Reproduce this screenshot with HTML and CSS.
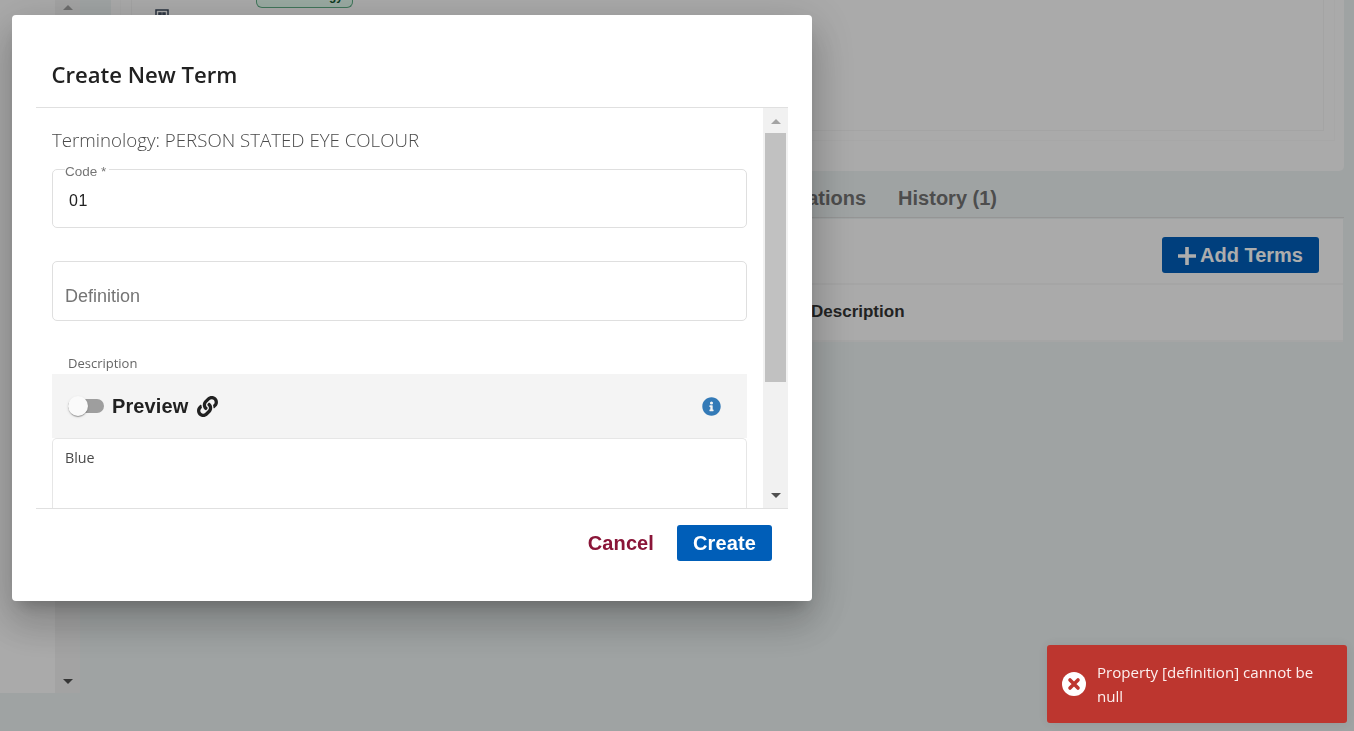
FILE: index.html
```html
<!DOCTYPE html>
<html lang="en">
<head>
<meta charset="utf-8">
<title>Create New Term</title>
<link rel="stylesheet" href="styles.css">
</head>
<body>
<div class="app">
  <aside class="sidebar"></aside>
  <div class="side-scroll">
    <svg class="arrow" viewBox="0 0 10 5" width="10" height="5"><path d="M5 0l5 5H0z" fill="#a3a3a3"/></svg>
    <svg class="arrow" viewBox="0 0 10 5" width="10" height="5"><path d="M0 0h10L5 5z" fill="#505050"/></svg>
  </div>
  <main class="main">
    <section class="card">
      <div class="card-mid">
        <div class="inner-box">
          <div class="card-head">
            <svg class="doc-icon" viewBox="0 0 14 16" width="14" height="16"><path d="M1 1h12v14H1zM4 4h2v2H4zM8 4h2v2H8z" fill="none" stroke="#3d4a5c" stroke-width="1.5"/></svg>
            <span class="badge"><span class="badge-text">Terminology</span></span>
          </div>
        </div>
      </div>
    </section>
    <nav class="tabs">
      <span class="tab">Annotations</span>
      <span class="tab">History (1)</span>
    </nav>
    <section class="panel">
      <div class="panel-bar">
        <button class="add-btn"><svg viewBox="0 0 18 18" width="18" height="18"><path d="M7.200 0h3.600v7.200H18v3.600h-7.200V18H7.200v-7.200H0V7.200h7.200z" fill="currentColor"/></svg>Add Terms</button>
      </div>
      <div class="table-head"><span>Description</span></div>
    </section>
  </main>
</div>

<div class="overlay">
  <div class="modal">
    <h2 class="modal-title">Create New Term</h2>
    <div class="modal-body">
      <div class="form">
        <p class="terminology">Terminology: PERSON STATED EYE COLOUR</p>
        <fieldset class="field">
          <legend>Code *</legend>
          <span class="field-value">01</span>
        </fieldset>
        <div class="field field-empty">Definition</div>
        <div class="desc-label">Description</div>
        <div class="toolbar">
          <span class="switch"><span class="knob"></span></span>
          <span class="preview">Preview</span>
          <svg class="link-icon" viewBox="0 0 512 512" width="21" height="21"><path fill="#212121" d="M326.600 185.400c59.700 59.800 58.900 155.700.4 214.600l-67.200 67.200c-59.300 59.300-155.700 59.300-215 0-59.300-59.300-59.300-155.700 0-215l37.100-37.100c9.800-9.800 26.800-3.300 27.300 10.600.6 17.700 3.800 35.500 9.700 52.700 2 5.800.6 12.300-3.800 16.600l-13.100 13.100c-28 28-28.900 73.700-1.200 102 28 28.600 74.100 28.700 102.300.5l67.200-67.200c28.200-28.200 28.100-73.800 0-101.800-3.700-3.700-7.400-6.600-10.300-8.600-4.900-3.400-7.800-8.900-8-14.800-.4-10.600 3.400-21.500 11.800-29.900l21-21c5.500-5.500 14.200-6.200 20.600-1.700 7.300 5.100 14.200 10.800 20.500 17.100zM467.500 44.500c-59.300-59.300-155.700-59.300-215 0l-67.200 67.200c-.1.1-.3.2-.4.4-58.500 58.900-59.300 154.800.4 214.600 6.300 6.300 13.200 12 20.500 17.100 6.400 4.500 15.100 3.800 20.600-1.700l21-21c8.400-8.400 12.200-19.300 11.800-29.900-.2-5.900-3.100-11.400-8-14.800-2.900-2-6.600-4.900-10.300-8.600-28.100-28-28.200-73.600 0-101.800l67.200-67.200c28.200-28.200 74.300-28.100 102.300.5 27.700 28.300 26.800 74-1.200 102l-13.100 13.100c-4.400 4.300-5.800 10.800-3.800 16.600 5.900 17.200 9.100 35 9.700 52.700.5 13.900 17.500 20.400 27.300 10.600l37.100-37.100c59.300-59.300 59.300-155.700 0-215z"/></svg>
          <svg class="info-icon" viewBox="0 0 512 512" width="19" height="19"><path fill="#337ab7" d="M256 8C119 8 8 119 8 256s111 248 248 248 248-111 248-248S393 8 256 8zm0 110a42 42 0 1 1 0 84 42 42 0 0 1 0-84zm56 254c0 6.600-5.400 12-12 12h-88c-6.600 0-12-5.400-12-12v-24c0-6.600 5.400-12 12-12h12v-64h-12c-6.600 0-12-5.400-12-12v-24c0-6.600 5.400-12 12-12h64c6.600 0 12 5.400 12 12v100h12c6.600 0 12 5.400 12 12z"/></svg>
        </div>
        <div class="editor">Blue</div>
      </div>
      <div class="scrollbar">
        <svg class="arrow" viewBox="0 0 10 5" width="10" height="5"><path d="M5 0l5 5H0z" fill="#a3a3a3"/></svg>
        <div class="thumb-track"><div class="thumb"></div></div>
        <svg class="arrow" viewBox="0 0 10 5" width="10" height="5"><path d="M0 0h10L5 5z" fill="#505050"/></svg>
      </div>
    </div>
    <div class="modal-actions">
      <button class="cancel-btn">Cancel</button>
      <button class="create-btn">Create</button>
    </div>
  </div>
</div>

<div class="toast">
  <svg class="toast-icon" viewBox="0 0 24 24" width="24" height="24"><circle cx="12" cy="12" r="12" fill="#fff"/><path d="M8 8l8 8M16 8l-8 8" stroke="#bd362f" stroke-width="3.6" stroke-linecap="round"/></svg>
  <span class="toast-text">Property [definition] cannot be null</span>
</div>
</body>
</html>
```
FILE: styles.css
```css
* { box-sizing: border-box; }
html, body { margin: 0; height: 100%; overflow: hidden; }
body { background: #ebf1f1; font-family: "Liberation Sans", Arial, sans-serif; }

.app { display: flex; height: 731px; align-items: flex-start; }
.sidebar { width: 55px; height: 693px; background: #fbfbfb; }
.side-scroll {
  width: 25px; height: 693px; background: #f1f1f1;
  display: flex; flex-direction: column; justify-content: space-between; align-items: center;
  padding: 5px 0 9px;
}
.arrow { display: block; flex: none; }
.main { flex: 1; padding: 0 10px 0 31px; min-width: 0; }

.card { height: 171px; background: #fbfbfb; border-radius: 0 0 5px 5px; padding: 0 9px 30px; }
.card-mid { height: 100%; border: solid #f6f6f6; border-width: 0 1px 1px; padding: 0 10px 9px; }
.inner-box { height: 100%; border: solid #f2f2f2; border-width: 0 1px 1px; }
.card-head { display: flex; align-items: flex-start; padding-left: 23px; gap: 87px; height: 26px; }
.doc-icon { flex: none; margin-top: 9px; }
.badge { flex: none; width: 97px; height: 8px; background: #e2fbee; border: 1px solid #5fae85; border-top: 0; border-radius: 0 0 6px 6px; color: #12562f; font-size: 12px; font-weight: 700; line-height: 14px; display: flex; justify-content: flex-end; align-items: flex-end; padding: 0 9px 4px 0; overflow: hidden; }
.badge-text { flex: none; }

.tabs { height: 47px; border-bottom: 1px solid #dcdcdc; display: flex; justify-content: flex-end; gap: 32px; padding: 16px 347px 0 0; }
.tab { font-weight: 700; font-size: 20px; line-height: 23px; color: #727272; white-space: nowrap; }

.panel { margin: 1px 1px 0 0; background: #fbfbfb; border-bottom: 2px solid #f3f3f3; }
.panel-bar { height: 66px; padding: 18px 24px 0 0; border-bottom: 2px solid #f3f3f3; display: flex; justify-content: flex-end; }
.add-btn { width: 157px; height: 36px; border: 0; border-radius: 3px; background: #005eb8; color: #fff; font: 700 20px/36px "Liberation Sans", Arial, sans-serif; display: flex; align-items: center; justify-content: center; gap: 4px; padding: 0; }
.add-btn svg { margin-top: 2px; }
.table-head { height: 53px; display: flex; align-items: center; padding-left: 700px; font-weight: 700; font-size: 17px; color: #333; margin-bottom: 2px; }

.overlay { position: fixed; inset: 0; background: rgba(0,0,0,.32); }
.modal {
  position: absolute; left: 12px; top: 15px; width: 800px; height: 586px;
  background: #fff; border-radius: 4px; padding: 0 24px;
  display: flex; flex-direction: column;
  box-shadow: 0 11px 15px -7px rgba(0,0,0,.2), 0 24px 38px 3px rgba(0,0,0,.14), 0 9px 46px 8px rgba(0,0,0,.12);
}
.modal-title { margin: 0; height: 92px; padding: 44px 0 0 15.500px; font: 600 22.100px/30px "Open Sans", sans-serif; color: #212121; flex: none; }
.modal-body { height: 402px; border-top: 1px solid #e0e0e0; border-bottom: 1px solid #e0e0e0; display: flex; flex: none; overflow: hidden; }
.form { flex: 1; min-width: 0; padding: 19px 16px 0 16px; display: flex; flex-direction: column; overflow: hidden; }
.terminology { margin: 0; height: 41px; flex: none; font: 300 18.700px/25px "Open Sans", sans-serif; color: #4a4a4a; white-space: nowrap; }

.field { margin: 0; border: 1px solid #dfdfdf; border-radius: 5px; padding: 0 16px; flex: none; background: #fff; }
fieldset.field { height: 69px; margin-top: -9px; padding: 0 16px; }
.field legend { font-size: 13.500px; line-height: 14px; height: 20px; color: #757575; padding: 6px 3px 0 0; margin-left: -4px; }
.field-value { display: block; font-size: 16px; line-height: 20px; color: #222; letter-spacing: .6px; margin-top: 12px; }
.field-empty { margin-top: 33px; height: 60px; font-size: 18px; line-height: 20px; color: #757575; padding: 24px 12px 0; }

.desc-label { margin-top: 34px; height: 19px; padding-left: 16px; font: 400 13px/17px "Open Sans", sans-serif; color: #666; flex: none; }
.toolbar { height: 64px; background: #f4f4f4; display: flex; align-items: center; padding: 0 26px 0 16px; flex: none; }
.switch { position: relative; width: 36px; height: 14px; border-radius: 7px; background: #9e9e9e; flex: none; }
.knob { position: absolute; left: 0; top: -3px; width: 20px; height: 20px; border-radius: 50%; background: #fafafa; box-shadow: 0 2px 1px -1px rgba(0,0,0,.2), 0 1px 1px 0 rgba(0,0,0,.14), 0 1px 3px 0 rgba(0,0,0,.12); }
.preview { margin-left: 8px; font-weight: 700; font-size: 20px; color: #212121; letter-spacing: .1px; }
.link-icon { margin-left: 9px; flex: none; }
.info-icon { margin: 1px 0 0 auto; flex: none; }
.editor { flex: 1 0 90px; border: 1px solid #e6e6e6; border-bottom: 0; border-radius: 5px 5px 0 0; padding: 9px 12px; font: 400 14.300px/20px "Open Sans", sans-serif; color: #4a4a4a; }

.scrollbar { width: 25px; flex: none; background: #f1f1f1; display: flex; flex-direction: column; align-items: center; justify-content: space-between; padding: 11px 0 10px; }
.thumb-track { flex: 1; width: 100%; padding: 9px 2px 0; }
.thumb { height: 249px; background: #c1c1c1; }

.modal-actions { flex: 1; display: flex; justify-content: flex-end; align-items: flex-start; padding: 16px 16px 0 0; gap: 23px; }
.cancel-btn, .create-btn { border: 0; height: 36px; padding: 0; font: 700 20px/36px "Liberation Sans", Arial, sans-serif; letter-spacing: .1px; }
.cancel-btn { background: none; color: #8a1538; }
.create-btn { width: 95px; background: #005eb8; color: #fff; border-radius: 3px; }

.toast { position: fixed; left: 1047px; top: 645px; width: 300px; height: 78px; background: #bd362f; border-radius: 3px; color: #fff; display: flex; align-items: center; padding: 0 24px 0 15px; gap: 11px; box-shadow: 0 0 12px rgba(0,0,0,.1); }
.toast-icon { flex: none; }
.toast-text { font: 400 15.100px/24px "Open Sans", sans-serif; color: #fdf0ef; }
```
